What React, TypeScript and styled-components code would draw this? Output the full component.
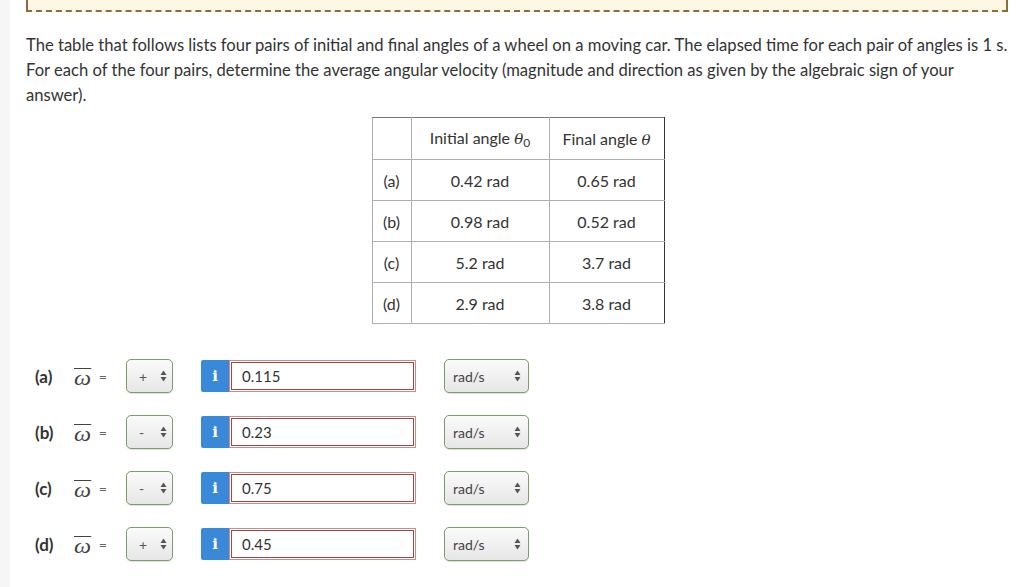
import { createGlobalStyle, styled } from "styled-components";

const GlobalStyle = createGlobalStyle`
  html, body {
    margin: 0;
    padding: 0;
    background: #ffffff;
  }
  body {
    font-family: Lato, "Open Sans", "Liberation Sans", sans-serif;
    color: #333333;
  }
`;

const rows = [
  { id: "a", initial: "0.42 rad", final: "0.65 rad", sign: "+", value: "0.115" },
  { id: "b", initial: "0.98 rad", final: "0.52 rad", sign: "-", value: "0.23" },
  { id: "c", initial: "5.2 rad", final: "3.7 rad", sign: "-", value: "0.75" },
  { id: "d", initial: "2.9 rad", final: "3.8 rad", sign: "+", value: "0.45" },
];

const Arrows = () => (
  <ArrowBox width="7" height="12" viewBox="0 0 7 12">
    <path d="M3.5 0.5 L6.5 5 L0.5 5 Z" fill="#555" />
    <path d="M3.5 11.5 L6.5 7 L0.5 7 Z" fill="#555" />
  </ArrowBox>
);

const App = () => {
  return (
    <Page>
      <GlobalStyle />
      <SideStrip />
      <Main>
        <Notice />
        <Question>
          The table that follows lists four pairs of initial and final angles of a wheel on a
          moving car. The elapsed time for each pair of angles is 1 s. For each of the four pairs,
          determine the average angular velocity (magnitude and direction as given by the
          algebraic sign of your answer).
        </Question>
        <TableWrap>
          <Table>
            <thead>
              <tr>
                <Th $w={39}></Th>
                <Th $w={138}>
                  Initial angle <Theta>θ</Theta>
                  <Sub>0</Sub>
                </Th>
                <Th $w={115}>
                  Final angle <Theta>θ</Theta>
                </Th>
              </tr>
            </thead>
            <tbody>
              {rows.map((r) => (
                <tr key={r.id}>
                  <Td>({r.id})</Td>
                  <Td>{r.initial}</Td>
                  <Td>{r.final}</Td>
                </tr>
              ))}
            </tbody>
          </Table>
        </TableWrap>
        <Answers>
          {rows.map((r) => (
            <AnswerRow key={r.id}>
              <PartLabel>({r.id})</PartLabel>
              <OmegaBox>
                <Omega>ω</Omega>
                <Equals>=</Equals>
              </OmegaBox>
              <SignSelect>
                <SignText>{r.sign}</SignText>
                <Arrows />
              </SignSelect>
              <InfoButton>i</InfoButton>
              <ValueInput>{r.value}</ValueInput>
              <UnitSelect>
                <UnitText>rad/s</UnitText>
                <Arrows />
              </UnitSelect>
            </AnswerRow>
          ))}
        </Answers>
      </Main>
    </Page>
  );
};

export default App;

const Page = styled.div`
  display: flex;
  width: 1024px;
  height: 587px;
  overflow: hidden;
`;

const SideStrip = styled.div`
  width: 10px;
  flex-shrink: 0;
  background-color: #f6f6f6;
`;

const Main = styled.div`
  width: 984px;
  padding-left: 16px;
  box-sizing: content-box;
`;

const Notice = styled.div`
  height: 12px;
  margin-right: 2px;
  background-color: #fcf8e3;
  border: 2px dashed #8a6d3b;
  border-top: none;
  box-sizing: border-box;
`;

const Question = styled.p`
  margin: 21px 0 0 0;
  font-size: 16.6px;
  line-height: 25px;
  color: #333333;
`;

const TableWrap = styled.div`
  display: flex;
  justify-content: center;
  margin-top: 9px;
`;

const Table = styled.table`
  border-collapse: collapse;
  border-top: 1px solid #777;
  border-left: 1px solid #999;
  border-right: 1px solid #333;
  font-size: 16px;
  color: #333;
`;

const Th = styled.th<{ $w: number }>`
  width: ${(p) => p.$w}px;
  height: 42px;
  padding: 0;
  font-weight: 400;
  border: 1px solid #b0b0b0;
  border-right-color: ${(p) => (p.$w === 115 ? "#333" : "#b0b0b0")};
  border-top-color: #777;
  text-align: center;
  box-sizing: border-box;
`;

const Td = styled.td`
  height: 41px;
  padding: 0;
  border: 1px solid #b0b0b0;
  text-align: center;
  box-sizing: border-box;

  &:last-child {
    border-right-color: #333;
  }
`;

const Theta = styled.span`
  font-family: "DejaVu Serif", "Liberation Serif", serif;
  font-style: italic;
  font-size: 15px;
`;

const Sub = styled.sub`
  font-size: 12px;
  vertical-align: -3px;
`;

const Answers = styled.div`
  display: flex;
  flex-direction: column;
  gap: 22px;
  margin-top: 35px;
`;

const AnswerRow = styled.div`
  display: flex;
  align-items: center;
  height: 34px;
  padding-left: 9px;
`;

const PartLabel = styled.div`
  width: 39px;
  font-size: 17px;
  font-weight: 700;
  color: #333;
`;

const OmegaBox = styled.div`
  display: flex;
  align-items: center;
  width: 52px;
  gap: 6px;
`;

const Omega = styled.span`
  display: inline-block;
  font-family: "Liberation Serif", "DejaVu Serif", serif;
  font-style: italic;
  font-size: 21px;
  line-height: 14px;
  height: 14px;
  padding-top: 2px;
  border-top: 1px solid #444;
  color: #444;
  transform: scaleX(1.15);
  transform-origin: left center;
`;

const Equals = styled.span`
  font-size: 14px;
  color: #666;
  margin-left: 4px;
`;

const selectBase = `
  display: flex;
  align-items: center;
  justify-content: space-between;
  height: 34px;
  box-sizing: border-box;
  border: 1px solid #79a06b;
  border-radius: 5px;
  background: linear-gradient(#fbfbfb, #e6e6e6);
  box-shadow: 0 1px 1px rgba(0, 0, 0, 0.12);
  color: #555;
`;

const SignSelect = styled.div`
  ${selectBase}
  width: 47px;
  padding: 0 5px 0 12px;
`;

const SignText = styled.span`
  font-size: 14px;
`;

const UnitSelect = styled.div`
  ${selectBase}
  width: 85px;
  margin-left: 28px;
  padding: 0 7px 0 8px;
`;

const UnitText = styled.span`
  font-size: 14px;
  color: #444;
`;

const ArrowBox = styled.svg`
  display: block;
`;

const InfoButton = styled.div`
  display: flex;
  align-items: center;
  justify-content: center;
  width: 28px;
  height: 32px;
  margin-left: 28px;
  background-color: #3a88d8;
  border-radius: 2px 0 0 2px;
  color: #ffffff;
  font-family: "DejaVu Serif", "Liberation Serif", serif;
  font-weight: 700;
  font-size: 15px;
`;

const ValueInput = styled.div`
  display: flex;
  align-items: center;
  width: 187px;
  height: 32px;
  box-sizing: border-box;
  padding-left: 12px;
  border: 1px solid #c98a8a;
  box-shadow: inset 0 0 0 1px #ffffff, inset 0 0 0 2px #a94442;
  font-size: 15px;
  color: #333;
`;
